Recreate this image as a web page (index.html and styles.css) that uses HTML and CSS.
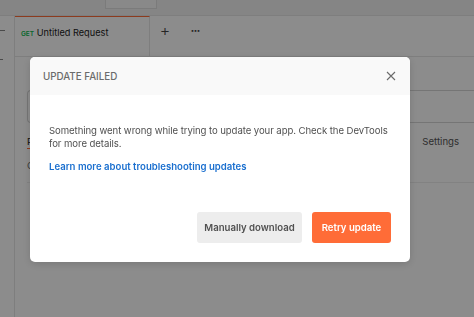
FILE: index.html
```html
<!DOCTYPE html>
<html lang="en">
<head>
  <meta charset="UTF-8">
  <title>Update failed</title>
  <link rel="stylesheet" href="styles.css">
</head>
<body>

<div class="app">
  <div class="topbar">
    <div class="search"></div>
  </div>
  <div class="main">
    <div class="sidebar">
      <span class="side-mark"></span>
      <span class="side-mark small"></span>
    </div>
    <div class="workspace">
      <div class="tabs">
        <div class="tab active">
          <span class="method">GET</span> Untitled Request
        </div>
        <span class="tab-action">+</span>
        <span class="tab-action dots">&bull;&bull;&bull;</span>
      </div>
      <div class="request">
        <div class="url-box"></div>
        <div class="req-tabs">
          <span class="req-tab current">P</span>
          <span class="req-tab right">Settings</span>
        </div>
        <div class="req-row">C</div>
      </div>
    </div>
  </div>
</div>

<div class="overlay">
  <div class="modal">
    <div class="modal-header">
      <span class="modal-title">UPDATE FAILED</span>
      <svg class="close" width="10" height="10" viewBox="0 0 10 10">
        <path d="M1 1L9 9M9 1L1 9" stroke="#6b6b6b" stroke-width="1.1" fill="none"/>
      </svg>
    </div>
    <div class="modal-body">
      <p>Something went wrong while trying to update your app. Check the DevTools for more details.</p>
      <a class="link" href="#">Learn more about troubleshooting updates</a>
      <div class="actions">
        <button type="button" class="btn secondary">Manually download</button>
        <button type="button" class="btn primary">Retry update</button>
      </div>
    </div>
  </div>
</div>

</body>
</html>
```

FILE: styles.css
```css
* {
  box-sizing: border-box;
}
body {
  margin: 0;
  font-family: Inter, "Noto Sans", sans-serif;
  background: #ffffff;
  color: #212121;
  width: 474px;
  height: 317px;
  overflow: hidden;
}
.app {
  height: 317px;
  display: flex;
  flex-direction: column;
}
.topbar {
  height: 16px;
  background: #f2f2f2;
  border-bottom: 1px solid #e6e6e6;
  padding-left: 105px;
}
.search {
  width: 52px;
  height: 9px;
  background: #fafafa;
  border: 1px solid #e0e0e0;
  border-top: none;
}
.main {
  flex: 1;
  display: flex;
}
.sidebar {
  width: 15px;
  border-right: 1px solid #e6e6e6;
  display: flex;
  flex-direction: column;
  padding-top: 14px;
  gap: 28px;
}
.side-mark {
  display: block;
  width: 5px;
  height: 1px;
  background: #888;
}
.side-mark.small {
  width: 3px;
}
.workspace {
  flex: 1;
}
.tabs {
  height: 41px;
  display: flex;
  align-items: center;
  border-bottom: 1px solid #e6e6e6;
}
.tab {
  width: 135px;
  height: 41px;
  border-top: 1px solid #ff6c37;
  border-right: 1px solid #e6e6e6;
  padding: 10px 0 0 6px;
  font-size: 9.2px;
  align-self: flex-start;
}
.method {
  font-size: 6.5px;
  font-weight: 600;
  color: #0cbb52;
}
.tab-action {
  width: 30px;
  text-align: center;
  font-size: 16px;
  font-weight: 300;
  color: #444;
  margin-top: -12px;
}
.dots {
  font-size: 7px;
  letter-spacing: -1px;
  margin-top: -12px;
}
.request {
  padding-left: 12px;
}
.url-box {
  margin-top: 33px;
  height: 33px;
  border: 1px solid #d6d6d6;
  border-right: none;
  border-radius: 4px 0 0 4px;
}
.req-tabs {
  display: flex;
  margin-top: 13px;
  font-size: 9.6px;
  color: #6b6b6b;
  height: 19px;
}
.req-tab.current {
  color: #212121;
  height: 13px;
  border-bottom: 1px solid #ff6c37;
}
.req-tab.right {
  margin-left: auto;
  margin-right: 15px;
  color: #555;
}
.req-row {
  font-size: 9.6px;
  color: #6b6b6b;
  padding-top: 5px;
  border-bottom: 1px solid #ededed;
  height: 28px;
}

.overlay {
  position: fixed;
  inset: 0;
  background: rgba(0, 0, 0, 0.45);
  padding: 57px 0 0 30px;
}
.modal {
  width: 380px;
  background: #ffffff;
  border-radius: 5px;
  overflow: hidden;
  box-shadow: 0 2px 8px rgba(0, 0, 0, 0.15);
}
.modal-header {
  height: 38px;
  background: #f9f9f9;
  display: flex;
  align-items: center;
  justify-content: space-between;
  padding: 0 14px 0 13px;
}
.modal-title {
  font-size: 9.8px;
  font-weight: 500;
  color: #6b6b6b;
}
.modal-body {
  padding: 30px 19px 19px;
}
.modal-body p {
  margin: 0 -4px 0 0;
  font-size: 9.6px;
  line-height: 12.5px;
  letter-spacing: -0.08px;
  color: #505050;
}
.link {
  display: block;
  margin-top: 11px;
  font-size: 9.6px;
  font-weight: 600;
  color: #1a6fcf;
  text-decoration: none;
}
.actions {
  display: flex;
  justify-content: flex-end;
  gap: 10px;
  margin-top: 40px;
}
.btn {
  height: 31px;
  border: none;
  border-radius: 3px;
  font-family: inherit;
  font-size: 9.6px;
  font-weight: 600;
  padding: 0;
  white-space: nowrap;
}
.btn.secondary {
  width: 105px;
  background: #ededed;
  color: #505050;
}
.btn.primary {
  width: 79px;
  background: #ff6c37;
  color: #ffffff;
}
```
